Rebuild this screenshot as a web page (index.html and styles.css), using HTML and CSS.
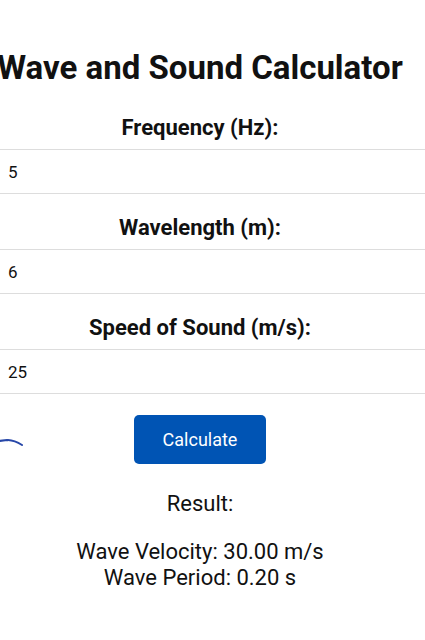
FILE: index.html
```html
<!DOCTYPE html>
<html lang="en">
<head>
  <meta charset="UTF-8" />
  <meta name="viewport" content="width=device-width, initial-scale=1.0"/>
  <title>Wave and Sound Calculator</title>
  <link rel="stylesheet" href="styles.css">
</head>
<body>

  <div class="calculator">
    <h1>Wave and Sound Calculator</h1>

    <div class="field">
      <label for="frequency">Frequency (Hz):</label>
      <input type="text" id="frequency" value="5">
    </div>

    <div class="field">
      <label for="wavelength">Wavelength (m):</label>
      <input type="text" id="wavelength" value="6">
    </div>

    <div class="field">
      <label for="speed">Speed of Sound (m/s):</label>
      <input type="text" id="speed" value="25">
    </div>

    <div class="actions">
      <svg class="wave" width="30" height="20" viewBox="0 0 30 20">
        <path d="M-1 6 L7 5 Q14 5 22 10" fill="none" stroke="#2747a8" stroke-width="2" stroke-linecap="round"/>
      </svg>
      <button class="calc-button">Calculate</button>
    </div>

    <div class="result">
      <h2>Result:</h2>
      <p>Wave Velocity: 30.00 m/s<br>Wave Period: 0.20 s</p>
    </div>
  </div>

</body>
</html>
```
FILE: styles.css
```css
* {
  margin: 0;
  padding: 0;
}

body {
  font-family: Roboto, 'Liberation Sans', sans-serif;
  background-color: #ffffff;
  color: #111111;
  overflow: hidden;
}

.calculator {
  width: 402px;
  margin-left: -1px;
  text-align: center;
}

h1 {
  font-size: 33px;
  font-weight: 700;
  line-height: 38px;
  padding-top: 49px;
  white-space: nowrap;
  margin-left: -30px;
  margin-right: -30px;
}

.field {
  margin-top: 21px;
}

.field:first-of-type {
  margin-top: 28px;
}

.field label {
  display: block;
  font-size: 22px;
  font-weight: 700;
  line-height: 26px;
  margin-bottom: 8px;
}

.field input {
  display: block;
  width: 100%;
  box-sizing: content-box;
  height: 23px;
  padding: 10px 40px 10px 8px;
  border: 1px solid #dddddd;
  font-family: Roboto, 'Liberation Sans', sans-serif;
  font-size: 17px;
  color: #111111;
  background: #ffffff;
  outline: none;
}

.actions {
  position: relative;
  margin-top: 21px;
  height: 49px;
}

.wave {
  position: absolute;
  left: 1px;
  top: 20px;
}

.calc-button {
  width: 132px;
  height: 49px;
  background-color: #0054b4;
  color: #ffffff;
  border: none;
  border-radius: 5px;
  font-family: Roboto, 'Liberation Sans', sans-serif;
  font-size: 18px;
  cursor: pointer;
}

.result {
  margin-top: 27px;
}

.result h2 {
  font-size: 22px;
  font-weight: 400;
  line-height: 26px;
}

.result p {
  margin-top: 22px;
  font-size: 22px;
  line-height: 26px;
}
```
